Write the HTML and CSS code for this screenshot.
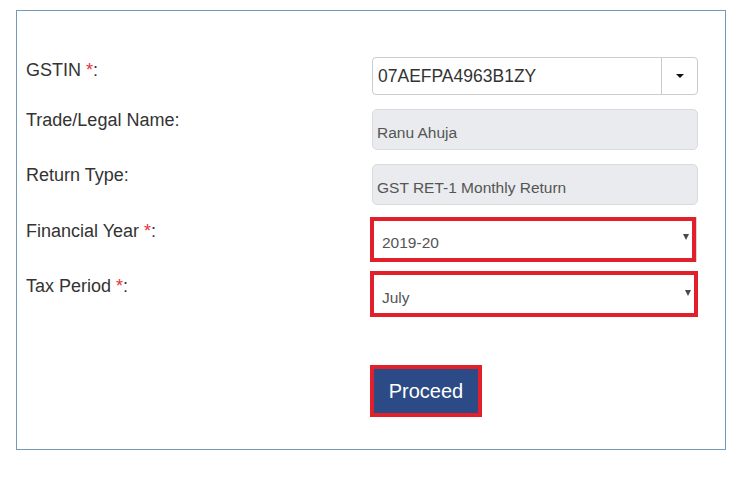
FILE: index.html
```html
<!DOCTYPE html>
<html lang="en">
<head>
<meta charset="utf-8">
<title>Return Filing</title>
<link rel="stylesheet" href="styles.css">
</head>
<body>
<div class="panel">
  <div class="row row-gstin">
    <div class="label">GSTIN <span class="req">*</span>:</div>
    <div class="input-group">
      <div class="ig-text">07AEFPA4963B1ZY</div>
      <div class="ig-btn"><span class="caret"></span></div>
    </div>
  </div>
  <div class="row row-trade">
    <div class="label">Trade/Legal Name:</div>
    <div class="readonly">Ranu Ahuja</div>
  </div>
  <div class="row row-return">
    <div class="label">Return Type:</div>
    <div class="readonly">GST RET-1 Monthly Return</div>
  </div>
  <div class="row row-fy">
    <div class="label">Financial Year <span class="req">*</span>:</div>
    <div class="select select-fy">
      <span class="sel-text">2019-20</span>
      <span class="sel-caret"></span>
    </div>
  </div>
  <div class="row row-tp">
    <div class="label">Tax Period <span class="req">*</span>:</div>
    <div class="select select-tp">
      <span class="sel-text">July</span>
      <span class="sel-caret"></span>
    </div>
  </div>
  <div class="row row-btn">
    <div class="label"></div>
    <button class="proceed" type="button">Proceed</button>
  </div>
</div>
</body>
</html>
```

FILE: styles.css
```css
* { box-sizing: border-box; }

html, body {
  margin: 0;
  padding: 0;
  background: #ffffff;
}

body {
  font-family: "Liberation Sans", Arial, sans-serif;
  color: #333333;
}

.panel {
  margin: 10px 0 0 16px;
  width: 710px;
  height: 440px;
  border: 1px solid #7898b4;
  padding: 46px 0 0 9px;
}

.row {
  display: flex;
  align-items: flex-start;
}

.label {
  width: 346px;
  flex: 0 0 346px;
  font-size: 18px;
  line-height: 20px;
  color: #333333;
}

.req { color: #e8303a; }

.row-gstin { margin-bottom: 14px; }
.row-gstin .label { padding-top: 3px; }

.row-trade { margin-bottom: 14px; }
.row-trade .label { padding-top: 1px; }

.row-return { margin-bottom: 12px; }
.row-return .label { padding-top: 1px; }

.row-fy { margin-bottom: 9px; }
.row-fy .label { padding-top: 4px; }

.row-tp { margin-bottom: 48px; }
.row-tp .label { padding-top: 5px; }

/* GSTIN input group */
.input-group {
  display: flex;
  width: 326px;
  height: 38px;
  border: 1px solid #cccccc;
  border-radius: 4px;
  background: #ffffff;
}

.ig-text {
  flex: 1;
  display: flex;
  align-items: center;
  padding-left: 5px;
  font-size: 17.5px;
  color: #333333;
}

.ig-btn {
  width: 36px;
  border-left: 1px solid #cccccc;
  display: flex;
  align-items: center;
  justify-content: center;
}

.caret {
  width: 0;
  height: 0;
  border-top: 4px solid #111111;
  border-left: 4px solid transparent;
  border-right: 4px solid transparent;
}

/* read-only fields */
.readonly {
  width: 326px;
  height: 41px;
  background: #e9ebee;
  border: 1px solid #d8dbde;
  border-radius: 5px;
  padding: 13px 0 0 4px;
  font-size: 15.5px;
  line-height: 20px;
  color: #555555;
}

/* highlighted selects */
.select {
  display: flex;
  justify-content: space-between;
  align-items: flex-start;
  margin-left: -2px;
  background: #ffffff;
  border: 4px solid #e2202b;
  font-size: 15.5px;
  line-height: 20px;
  color: #555555;
  padding: 0 3px 0 8px;
}

.select-fy {
  width: 326px;
  height: 45px;
  box-shadow: 1px 0 0 #d6d6d6;
}

.select-tp {
  width: 328px;
  height: 46px;
}

.select-fy .sel-text { padding-top: 12px; }
.select-tp .sel-text { padding-top: 13px; }

.sel-caret {
  width: 0;
  height: 0;
  border-top: 6px solid #4a4a4a;
  border-left: 3.5px solid transparent;
  border-right: 3.5px solid transparent;
  margin-top: 13px;
}

.select-tp .sel-caret { margin-top: 15px; }

/* button */
.proceed {
  margin-left: -2px;
  width: 112px;
  height: 52px;
  border: 4px solid #e2202b;
  background: #2b4a86;
  color: #ffffff;
  font-family: "Liberation Sans", Arial, sans-serif;
  font-size: 20px;
  padding: 0;
  cursor: pointer;
}
```
